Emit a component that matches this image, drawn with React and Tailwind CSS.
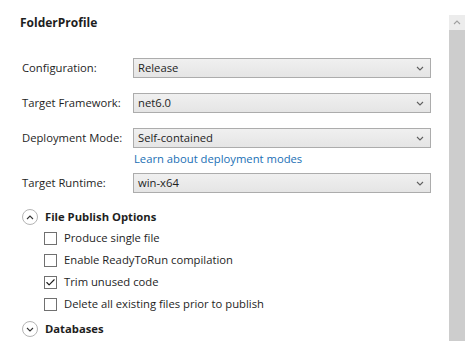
import { Check } from 'lucide-react';

const font = { fontFamily: '"Open Sans", "Noto Sans", sans-serif' };

function Chevron({ up = false, className = '' }) {
  return (
    <svg width="8" height="5" viewBox="0 0 8 5" className={className}>
      <path
        d={up ? 'M1 4 L4 1 L7 4' : 'M1 1 L4 4 L7 1'}
        fill="none"
        stroke="currentColor"
        strokeWidth="1.1"
      />
    </svg>
  );
}

function Dropdown({ value }) {
  return (
    <div className="w-[298px] h-[20px] border border-[#acacac] bg-gradient-to-b from-[#f0f0f0] to-[#e5e5e5] flex items-center justify-between pl-[4px] pr-[6px]">
      <span className="text-[11.25px] leading-none text-[#1e1e1e]">{value}</span>
      <Chevron className="text-[#606060]" />
    </div>
  );
}

function Row({ label, value, className = '' }) {
  return (
    <div className={`flex items-center ${className}`}>
      <div className="w-[111px] text-[11.25px] text-[#1e1e1e]">{label}</div>
      <Dropdown value={value} />
    </div>
  );
}

function SectionToggle({ open }) {
  return (
    <div className="w-[16px] h-[16px] rounded-full border border-[#b4b4b4] flex items-center justify-center text-[#333]">
      <Chevron up={open} />
    </div>
  );
}

function CheckRow({ label, checked }) {
  return (
    <div className="flex items-center h-[22px]">
      <div className="w-[13px] h-[13px] border border-[#707070] bg-white flex items-center justify-center">
        {checked && <Check size={11} strokeWidth={2.5} className="text-[#1e1e1e]" />}
      </div>
      <span className="ml-[7px] text-[11.25px] text-[#1e1e1e]">{label}</span>
    </div>
  );
}

export default function App() {
  return (
    <div className="w-[474px] h-[341px] bg-white flex overflow-hidden" style={font}>
      {/* Main panel */}
      <div className="w-[449px] pl-[22px]">
        <div className="mt-[14px] -ml-[2px] h-[18px] text-[12px] font-bold leading-[18px] text-[#1e1e1e]">
          FolderProfile
        </div>

        <Row label="Configuration:" value="Release" className="mt-[26px]" />
        <Row label="Target Framework:" value="net6.0" className="mt-[15px]" />
        <Row label="Deployment Mode:" value="Self-contained" className="mt-[15px]" />
        <div className="ml-[112px] h-[22px] flex items-center text-[11.25px] text-[#1a6fb5]">
          Learn about deployment modes
        </div>
        <Row label="Target Runtime:" value="win-x64" className="mt-[3px]" />

        {/* File Publish Options */}
        <div className="mt-[16px] flex items-center h-[16px]">
          <SectionToggle open />
          <span className="ml-[7px] text-[11.25px] font-bold text-[#1e1e1e]">File Publish Options</span>
        </div>
        <div className="ml-[22px] mt-[2px] flex flex-col">
          <CheckRow label="Produce single file" />
          <CheckRow label="Enable ReadyToRun compilation" />
          <CheckRow label="Trim unused code" checked />
          <CheckRow label="Delete all existing files prior to publish" />
        </div>

        <div className="mt-[6px] flex items-center h-[16px]">
          <SectionToggle />
          <span className="ml-[7px] text-[11.25px] font-bold text-[#1e1e1e]">Databases</span>
        </div>
      </div>

      {/* Scrollbar */}
      <div className="w-[16px] mt-[15px] flex flex-col">
        <div className="h-[15px] bg-[#ececec] flex items-center justify-center text-[#a0a0a0]">
          <Chevron up />
        </div>
        <div className="flex-1 bg-[#cdcdcd]" />
      </div>
    </div>
  );
}
